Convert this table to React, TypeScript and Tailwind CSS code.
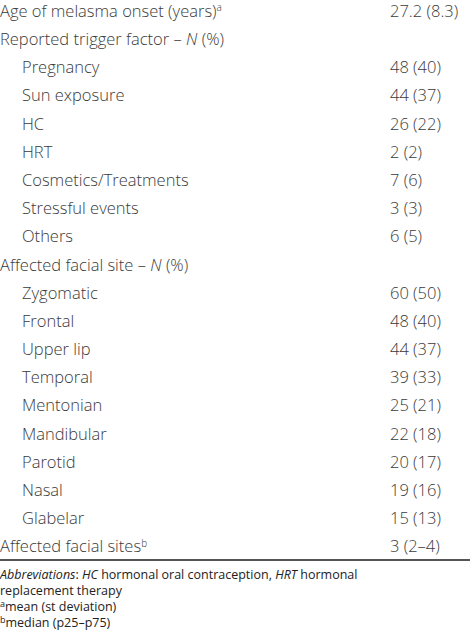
import React from "react";

type Row = { label: React.ReactNode; value?: string; indent?: boolean };

const Sup = ({ c }: { c: string }) => (
  <sup className="relative top-[-0.55em] text-[10px] leading-none">{c}</sup>
);

const rows: Row[] = [
  { label: <>Age of melasma onset (years)<Sup c="a" /></>, value: "27.2 (8.3)" },
  { label: <>Reported trigger factor – <i>N</i> (%)</> },
  { label: "Pregnancy", value: "48 (40)", indent: true },
  { label: "Sun exposure", value: "44 (37)", indent: true },
  { label: "HC", value: "26 (22)", indent: true },
  { label: "HRT", value: "2 (2)", indent: true },
  { label: "Cosmetics/Treatments", value: "7 (6)", indent: true },
  { label: "Stressful events", value: "3 (3)", indent: true },
  { label: "Others", value: "6 (5)", indent: true },
  { label: <>Affected facial site – <i>N</i> (%)</> },
  { label: "Zygomatic", value: "60 (50)", indent: true },
  { label: "Frontal", value: "48 (40)", indent: true },
  { label: "Upper lip", value: "44 (37)", indent: true },
  { label: "Temporal", value: "39 (33)", indent: true },
  { label: "Mentonian", value: "25 (21)", indent: true },
  { label: "Mandibular", value: "22 (18)", indent: true },
  { label: "Parotid", value: "20 (17)", indent: true },
  { label: "Nasal", value: "19 (16)", indent: true },
  { label: "Glabelar", value: "15 (13)", indent: true },
  { label: <>Affected facial sites<Sup c="b" /></>, value: "3 (2–4)" },
];

export default function App() {
  return (
    <div className="w-[474px] h-[634px] overflow-hidden bg-white font-['Open_Sans',sans-serif]">
      <div className="h-[560px] -mt-[3px] font-light text-[16.5px] leading-none text-[#3a3a3a]">
        {rows.map((r, i) => (
          <div key={i} className="flex h-[28.2px] items-center">
            <div className={r.indent ? "w-[390px] pl-[22px]" : "w-[390px] pl-0"}>{r.label}</div>
            <div className="whitespace-nowrap">{r.value}</div>
          </div>
        ))}
      </div>
      <div className="mt-[2px] h-[2px] w-[470px] bg-[#555]" />
      <div className="pt-[6px] text-[12.5px] text-[#222]">
        <div className="h-[16px] leading-[16px]">
          <i>Abbreviations</i>: <i>HC</i> hormonal oral contraception, <i>HRT</i> hormonal
        </div>
        <div className="h-[16px] leading-[16px]">replacement therapy</div>
        <div className="h-[16px] leading-[16px]">
          <sup className="relative top-[-0.4em] text-[9px] leading-none">a</sup>mean (st deviation)
        </div>
        <div className="h-[16px] leading-[16px]">
          <sup className="relative top-[-0.4em] text-[9px] leading-none">b</sup>median (p25–p75)
        </div>
      </div>
    </div>
  );
}
